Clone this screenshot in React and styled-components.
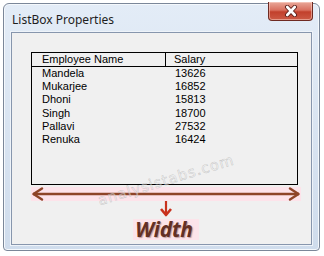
import React from "react";
import styled, { createGlobalStyle } from "styled-components";

const Global = createGlobalStyle`
  html, body { margin: 0; padding: 0; background: #ffffff; }
  body { width: 324px; height: 256px; overflow: hidden; }
`;

const Page = styled.div`
  width: 324px;
  height: 256px;
  padding: 3px 4px 5px 3px;
  box-sizing: border-box;
`;

const Window = styled.div`
  position: relative;
  height: 100%;
  box-sizing: border-box;
  display: flex;
  flex-direction: column;
  border: 1px solid #7b8799;
  border-radius: 6px 6px 4px 4px;
  background: linear-gradient(180deg, #e3ecf7 0%, #dde7f3 30%, #cfdcec 100%);
  box-shadow: inset 0 0 0 1px #f4f8fc;
`;

const TitleBar = styled.div`
  height: 28px;
  display: flex;
  align-items: center;
  justify-content: space-between;
  padding: 0 6px 0 8px;
  flex-shrink: 0;
`;

const Title = styled.span`
  font-family: "Noto Sans", "Open Sans", sans-serif;
  font-size: 12px;
  color: #1e1e1e;
  margin-top: 2px;
`;

const CloseButton = styled.div`
  align-self: flex-start;
  margin-top: -2px;
  width: 45px;
  height: 19px;
  box-sizing: border-box;
  border: 1px solid #6e2a22;
  border-top: none;
  border-radius: 0 0 4px 4px;
  background: linear-gradient(180deg, #e9a899 0%, #d9705f 45%, #c2402c 55%, #cc5a45 100%);
  box-shadow: inset 0 0 0 1px rgba(255, 220, 210, 0.5);
  display: flex;
  align-items: center;
  justify-content: center;
`;

const Client = styled.div`
  flex: 1;
  margin: 0 7px 5px 7px;
  border: 1px solid #8796ad;
  background: #f0f0f0;
  box-shadow: 0 0 0 1px #eef3f9;
  padding: 19px 15px 0 19px;
  display: flex;
  flex-direction: column;
  position: relative;
  overflow: hidden;
`;

const ListBox = styled.div`
  width: 267px;
  height: 133px;
  box-sizing: border-box;
  border: 1px solid #000000;
  background: #f0f0f0;
  font-family: "Liberation Sans", Arial, sans-serif;
  font-size: 11px;
  color: #000;
`;

const Header = styled.div`
  display: grid;
  grid-template-columns: 134px 1fr;
  height: 14px;
  border-bottom: 1px solid #000;
  box-sizing: border-box;
`;

const HeaderCell = styled.div`
  padding-left: ${(p) => p.$pad}px;
  line-height: 13px;
  border-right: ${(p) => (p.$divider ? "1px solid #000" : "none")};
`;

const Row = styled.div`
  display: grid;
  grid-template-columns: 134px 1fr;
  height: 13.2px;
  line-height: 13px;
`;

const Cell = styled.div`
  padding-left: ${(p) => p.$pad}px;
`;

const Annotation = styled.div`
  display: flex;
  flex-direction: column;
  align-items: center;
  width: 270px;
  margin-top: 2px;
`;

const Band = styled.div`
  width: 270px;
  height: 14px;
  background: #fde3ea;
  display: flex;
`;

const WidthLabel = styled.div`
  margin-top: 2px;
  padding: 0 6px 0 2px;
  background: #fce4ea;
  font-family: "Open Sans", "Noto Sans", sans-serif;
  font-weight: 700;
  font-style: italic;
  font-size: 21px;
  line-height: 21px;
  color: #633024;
  text-shadow: 1px 1px 1px rgba(80, 30, 20, 0.35);
  letter-spacing: -0.3px;
`;

const Watermark = styled.div`
  position: absolute;
  left: 84px;
  top: 160px;
  transform: rotate(-17deg);
  transform-origin: left top;
  font-family: "DejaVu Sans", sans-serif;
  font-size: 14.5px;
  letter-spacing: 1px;
  color: rgba(255, 255, 255, 0.45);
  -webkit-text-stroke: 0.5px rgba(160, 160, 160, 0.55);
  pointer-events: none;
  white-space: nowrap;
`;

const employees = [
  ["Mandela", "13626"],
  ["Mukarjee", "16852"],
  ["Dhoni", "15813"],
  ["Singh", "18700"],
  ["Pallavi", "27532"],
  ["Renuka", "16424"],
];

export default function App() {
  return (
    <Page>
      <Global />
      <Window>
        <TitleBar>
          <Title>ListBox Properties</Title>
          <CloseButton>
            <svg width="16" height="12" viewBox="0 0 16 12">
              <path
                d="M4.2 2 L11.8 10 M11.8 2 L4.2 10"
                stroke="#5a1e18"
                strokeWidth="4.4"
                strokeLinecap="round"
                fill="none"
              />
              <path
                d="M4.2 2 L11.8 10 M11.8 2 L4.2 10"
                stroke="#ffffff"
                strokeWidth="2.6"
                strokeLinecap="round"
                fill="none"
              />
            </svg>
          </CloseButton>
        </TitleBar>
        <Client>
          <ListBox>
            <Header>
              <HeaderCell $pad={10} $divider>Employee Name</HeaderCell>
              <HeaderCell $pad={8}>Salary</HeaderCell>
            </Header>
            {employees.map(([name, salary]) => (
              <Row key={name}>
                <Cell $pad={10}>{name}</Cell>
                <Cell $pad={9}>{salary}</Cell>
              </Row>
            ))}
          </ListBox>
          <Annotation>
            <Band>
              <svg width="270" height="14" viewBox="0 0 270 14">
                <line x1="2" y1="7" x2="268" y2="7" stroke="#8e4528" strokeWidth="2.4" />
                <path d="M11 1.5 L2.5 7 L11 12.5" stroke="#8e4528" strokeWidth="2.4" fill="none" strokeLinecap="round" strokeLinejoin="round" />
                <path d="M259 1.5 L267.5 7 L259 12.5" stroke="#8e4528" strokeWidth="2.4" fill="none" strokeLinecap="round" strokeLinejoin="round" />
              </svg>
            </Band>
            <svg width="14" height="16" viewBox="0 0 14 16">
              <line x1="7" y1="0" x2="7" y2="13" stroke="#c8321e" strokeWidth="2.2" />
              <path d="M2 8 L7 14 L12 8" stroke="#c8321e" strokeWidth="2.6" fill="none" strokeLinejoin="round" />
            </svg>
            <WidthLabel>Width</WidthLabel>
          </Annotation>
          <Watermark>analysistabs.com</Watermark>
        </Client>
      </Window>
    </Page>
  );
}
